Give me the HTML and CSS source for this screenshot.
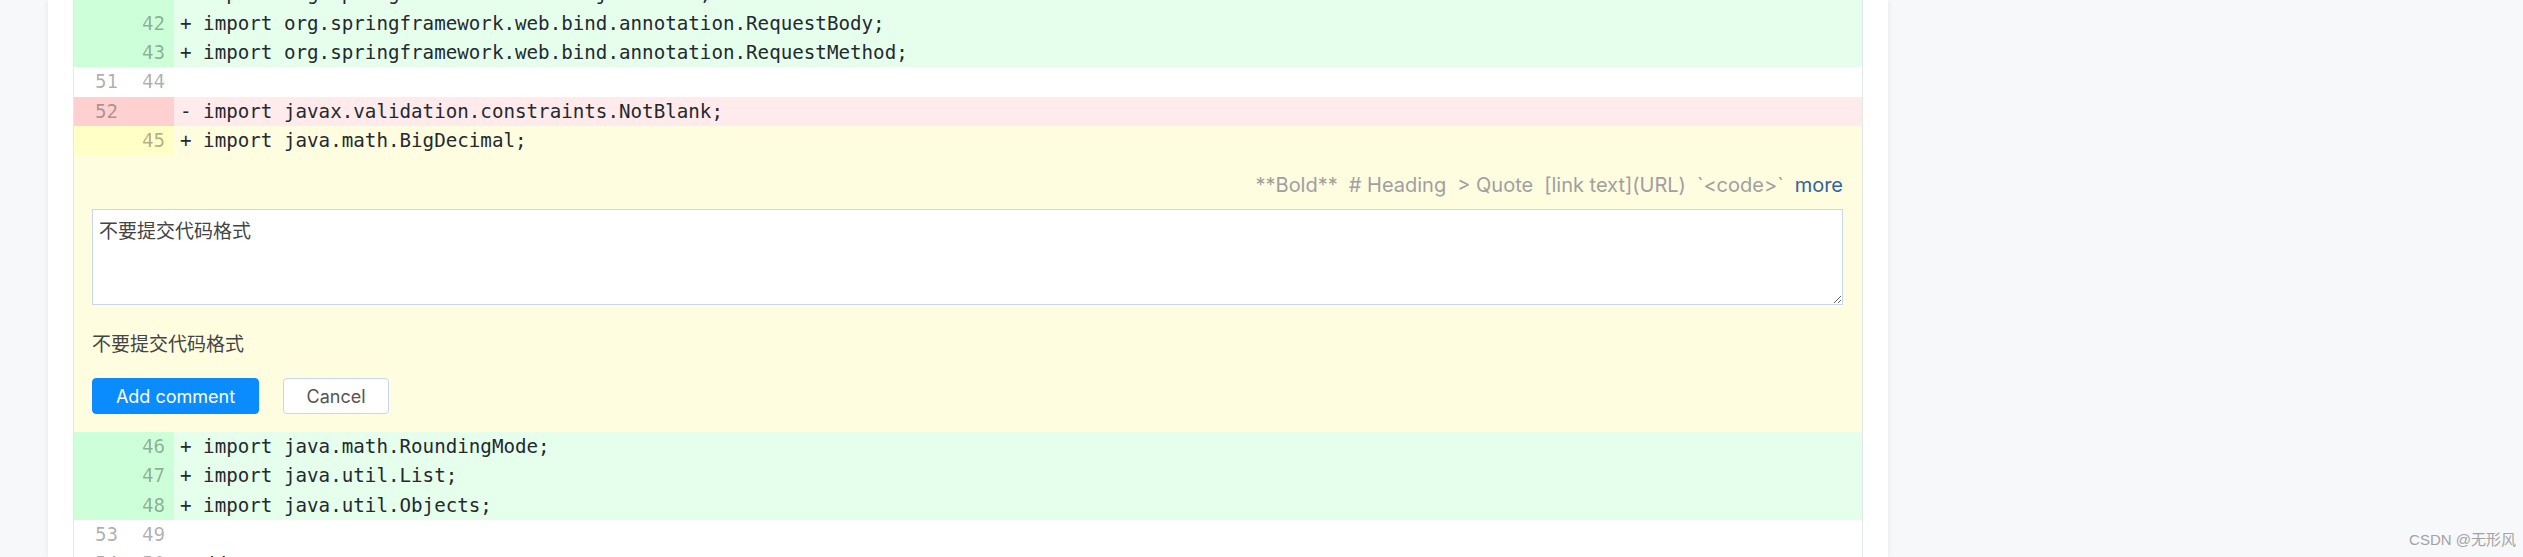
FILE: index.html
```html
<!DOCTYPE html>
<html lang="zh-CN">
<head>
    <meta charset="UTF-8">
    <meta name="viewport" content="width=device-width, initial-scale=1.0">
    <title>Review diff</title>
    <link rel="stylesheet" href="styles.css">
</head>
<body>
    <div class="page">
        <div class="main">
            <!-- diff 表格，頁面已往下捲了一點 -->
            <div class="diff">
                <div class="line add"><span class="num"></span><span class="num">41</span><span class="code">+ import org.springframework.util.ObjectUtils;</span></div>
                <div class="line add"><span class="num"></span><span class="num">42</span><span class="code">+ import org.springframework.web.bind.annotation.RequestBody;</span></div>
                <div class="line add"><span class="num"></span><span class="num">43</span><span class="code">+ import org.springframework.web.bind.annotation.RequestMethod;</span></div>
                <div class="line"><span class="num">51</span><span class="num">44</span><span class="code"></span></div>
                <div class="line del"><span class="num">52</span><span class="num"></span><span class="code">- import javax.validation.constraints.NotBlank;</span></div>
                <div class="line cur"><span class="num"></span><span class="num">45</span><span class="code">+ import java.math.BigDecimal;</span></div>

                <!-- 行內評論區 -->
                <div class="comment">
                    <div class="hints">
                        <span>**Bold**</span>
                        <span># Heading</span>
                        <span>&gt; Quote</span>
                        <span>[link text](URL)</span>
                        <span>`&lt;code&gt;`</span>
                        <a href="#">more</a>
                    </div>
                    <textarea class="editor">不要提交代码格式</textarea>
                    <p class="preview">不要提交代码格式</p>
                    <div class="actions">
                        <button class="btn btn-primary">Add comment</button>
                        <button class="btn">Cancel</button>
                    </div>
                </div>

                <div class="line add"><span class="num"></span><span class="num">46</span><span class="code">+ import java.math.RoundingMode;</span></div>
                <div class="line add"><span class="num"></span><span class="num">47</span><span class="code">+ import java.util.List;</span></div>
                <div class="line add"><span class="num"></span><span class="num">48</span><span class="code">+ import java.util.Objects;</span></div>
                <div class="line"><span class="num">53</span><span class="num">49</span><span class="code"></span></div>
                <div class="line"><span class="num">54</span><span class="num">50</span><span class="code">  //</span></div>
            </div>
        </div>
    </div>
    <div class="watermark">CSDN @无形风</div>
</body>
</html>
```

FILE: styles.css
```css
*{
    margin: 0;
    padding: 0;
    box-sizing: border-box;
}
html,body{
    height: 100%;
}
body{
    background-color: #f7f8fa;
    font-family: Inter, "Noto Sans CJK SC", sans-serif;
    overflow: hidden;
    position: relative;
}
.page{
    display: flex;
    height: 100%;
}
.main{
    width: 1840px;
    margin-left: 48px;
    padding: 0 25px;
    background-color: #fff;
    box-shadow: 0 0 6px rgba(0,0,0,.08);
}
/* 往上捲了一部分，第一行只露出一半 */
.diff{
    margin-top: -20.67px;
    border-left: 1px solid #e3e6ea;
    border-right: 1px solid #e3e6ea;
    font-family: "DejaVu Sans Mono", monospace;
    font-size: 19.2px;
    color: #24292e;
}
.line{
    display: grid;
    grid-template-columns: 48px 52px 1fr;
    height: 29.33px;
    line-height: 29.33px;
}
.num{
    text-align: right;
    color: rgba(0,0,0,.32);
    padding-right: 4px;
}
.num + .num{
    padding-right: 9px;
}
.code{
    white-space: pre;
    padding-left: 6px;
}
.add .num{ background-color: #cdffd8; }
.add .code{ background-color: #e6ffec; }
.del .num{ background-color: #ffd0d0; }
.del .code{ background-color: #ffebeb; }
.cur .num{ background-color: #ffffc6; }
.cur .code{ background-color: #fffde0; }

.comment{
    background-color: #fffde0;
    padding: 17.7px 19px 18px 18px;
    font-family: Inter, "Noto Sans CJK SC", sans-serif;
    font-size: 19px;
}
.hints{
    display: flex;
    justify-content: flex-end;
    gap: 11px;
    font-size: 20px;
    line-height: 24px;
    color: #a0a0a0;
}
.hints a{
    color: #33629e;
    text-decoration: none;
}
.editor{
    display: block;
    width: 100%;
    height: 96px;
    margin-top: 12px;
    padding: 8px 6px;
    border: 1px solid #c9d8e8;
    background-color: #fff;
    font-family: "Noto Sans CJK SC", sans-serif;
    font-size: 19px;
    line-height: 24px;
    color: #444;
}
.preview{
    margin-top: 26px;
    line-height: 24px;
    font-family: "Noto Sans CJK SC", sans-serif;
    color: #444;
}
.actions{
    display: flex;
    gap: 24px;
    margin-top: 23px;
}
.btn{
    height: 36px;
    width: 106px;
    border: 1px solid #c7d7ea;
    border-radius: 4px;
    background-color: #fff;
    color: #555;
    font-family: Inter, sans-serif;
    font-size: 18px;
}
.btn-primary{
    width: 167px;
    border-color: #0a8cff;
    background-color: #0a8cff;
    color: #fff;
}
.watermark{
    position: absolute;
    right: 7px;
    bottom: 8px;
    font-size: 15px;
    color: #a3a3a3;
    font-family: "Liberation Sans", "Noto Sans CJK SC", sans-serif;
}
```
